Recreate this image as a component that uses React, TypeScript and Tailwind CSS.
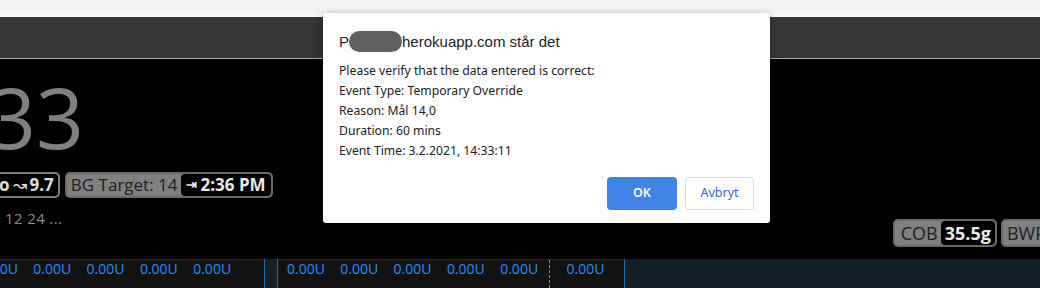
export default function App() {
  const left = ["0.00U", "0.00U", "0.00U", "0.00U", "0.00U"];
  const right = ["0.00U", "0.00U", "0.00U", "0.00U", "0.00U"];

  return (
    <div className="relative w-[1040px] h-[288px] overflow-hidden bg-black font-['Open_Sans',sans-serif]">
      {/* browser strip */}
      <div className="h-[13px] bg-[#f1f3f4]" />
      <div className="h-[4px] bg-[#f7f8f9]" />
      {/* nightscout header */}
      <div className="h-[42px] bg-[#353535] border-b border-[#aaaaaa]" />

      {/* big reading */}
      <div className="h-[113px] -ml-[12px] pt-[16px] text-[84px] leading-none text-[#808080]">33</div>

      {/* pills row */}
      <div className="flex items-center gap-[5px] h-[26px]">
        <div className="-ml-[7px] flex items-center h-[26px] px-[4px] border-2 border-[#7d7d7d] rounded-[5px] text-[#dddddd] text-[17px] font-bold">
          o <span className="mx-[3px] font-normal">↝</span>9.7
        </div>
        <div className="flex items-center h-[26px] bg-[#808080] border-2 border-[#6a6a6a] rounded-[5px] text-[17px] text-[#202020] pl-[4px]">
          BG Target: 14
          <span className="ml-[3px] flex items-center h-[22px] px-[5px] bg-black rounded-[4px] text-[#e8e8e8] font-bold">
            <span className="text-[13px] mr-[4px]">⇥</span>2:36 PM
          </span>
        </div>
      </div>

      {/* second row */}
      <div className="flex items-start h-[61px]">
        <div className="ml-[5px] mt-[9px] text-[15px] text-[#8a8a8a] tracking-wide">12 24 ...</div>
        <div className="ml-auto mt-[21px] flex items-center gap-[4px] -mr-[14px]">
          <div className="flex items-center h-[28px] bg-[#808080] border-2 border-[#6a6a6a] rounded-[5px] text-[18px] text-[#202020] pl-[6px]">
            COB
            <span className="ml-[3px] flex items-center h-[24px] px-[4px] bg-black rounded-[4px] text-[#e8e8e8] font-bold">35.5g</span>
          </div>
          <div className="flex items-center h-[28px] bg-[#808080] border-2 border-[#6a6a6a] rounded-[5px] text-[18px] text-[#202020] pl-[4px] pr-[6px]">
            BWP
          </div>
        </div>
      </div>

      {/* basal / bolus strip */}
      <div className="flex h-[29px] bg-[#13202a]">
        <div className="flex w-[264px] shrink-0 overflow-hidden bg-[#121212] border-t border-[#1a2d3b] leading-[18px]">
          {left.map((v, i) => (
            <span key={i} className={`w-[53.3px] shrink-0 text-[14px] text-[#1e8fff] ${i === 0 ? "-ml-[20px]" : ""}`}>{v}</span>
          ))}
        </div>
        <div className="w-[14px] shrink-0 border-x border-[#1d6fb0]" />
        <div className="flex w-[347px] shrink-0 bg-[#121212] border-t border-r border-[#1d6fb0] border-t-[#1a2d3b] pl-[9px] leading-[18px]">
          {right.map((v, i) => (
            <span key={i} className="w-[53.3px] shrink-0 text-[14px] text-[#1e8fff]">{v}</span>
          ))}
          <span className="-ml-[4px] h-[28px] border-l border-dashed border-[#8a8a8a]" />
          <span className="ml-[16px] text-[14px] text-[#1e8fff]">0.00U</span>
        </div>
      </div>

      {/* confirm dialog */}
      <div className="absolute left-[323px] top-[13px] w-[447px] h-[210px] bg-white rounded-[3px] shadow-[0_2px_8px_rgba(0,0,0,0.35)] px-[16px] pt-[18px] font-['Noto_Sans',sans-serif] text-[#202124]">
        <div className="flex items-center font-['Liberation_Sans',sans-serif] text-[15px] leading-[20px]">
          P
          <span className="inline-block w-[53px] h-[21px] rounded-full bg-[#606060]" />
          herokuapp.com står det
        </div>
        <div className="mt-[9px] text-[12.2px] leading-[20px]">
          <div>Please verify that the data entered is correct:</div>
          <div>Event Type: Temporary Override</div>
          <div>Reason: Mål 14,0</div>
          <div>Duration: 60 mins</div>
          <div>Event Time: 3.2.2021, 14:33:11</div>
        </div>
        <div className="flex justify-end gap-[8px] mt-[16px]">
          <button className="w-[70px] h-[33px] rounded-[4px] bg-[#3f85e8] text-white text-[12.5px] font-semibold">OK</button>
          <button className="w-[69px] h-[33px] rounded-[4px] border border-[#dadce0] bg-white text-[#3562e0] text-[12.5px]">Avbryt</button>
        </div>
      </div>
    </div>
  );
}
